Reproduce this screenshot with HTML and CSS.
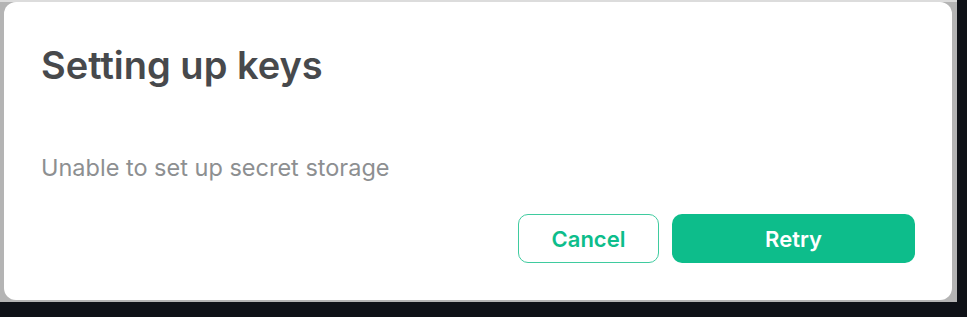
FILE: index.html
```html
<!DOCTYPE html>
<html lang="en">
<head>
  <meta charset="UTF-8">
  <title>Setting up keys</title>
  <link rel="stylesheet" href="styles.css">
</head>
<body>
  <div class="backdrop">
    <div class="dialog">
      <h2 class="dialog-title">Setting up keys</h2>
      <p class="dialog-body">Unable to set up secret storage</p>
      <div class="dialog-buttons">
        <button class="btn btn-outline">Cancel</button>
        <button class="btn btn-primary">Retry</button>
      </div>
    </div>
  </div>
</body>
</html>
```

FILE: styles.css
```css
body {
  margin: 0;
  background-color: #0e1117;
  font-family: Inter, 'Noto Sans', sans-serif;
  width: 967px;
  height: 317px;
  overflow: hidden;
}

.backdrop {
  width: 957px;
  height: 302px;
  background-color: #b4b4b4;
  border-top: 2px solid #dcdcdc;
  padding: 0 5px 2px 4px;
  box-sizing: border-box;
}

.dialog {
  height: 100%;
  background-color: #ffffff;
  border-radius: 12px;
  padding: 0 37px 0 37px;
  box-sizing: border-box;
  display: flex;
  flex-direction: column;
}

.dialog-title {
  margin: 40px 0 0 0;
  font-size: 38px;
  font-weight: 600;
  color: #47494c;
  line-height: 46px;
}

.dialog-body {
  margin: 66px 0 0 0;
  font-size: 23.5px;
  color: #8d8f91;
  line-height: 28px;
}

.dialog-buttons {
  display: flex;
  justify-content: flex-end;
  gap: 13px;
  margin-top: 32px;
}

.btn {
  height: 49px;
  border-radius: 10px;
  font-family: Inter, 'Noto Sans', sans-serif;
  font-size: 22px;
  font-weight: 600;
  cursor: pointer;
  box-sizing: border-box;
}

.btn-outline {
  width: 141px;
  background-color: #ffffff;
  border: 1px solid #3fcb9f;
  color: #0dbd8b;
}

.btn-primary {
  width: 243px;
  background-color: #0dbd8b;
  border: none;
  color: #ffffff;
}
```
